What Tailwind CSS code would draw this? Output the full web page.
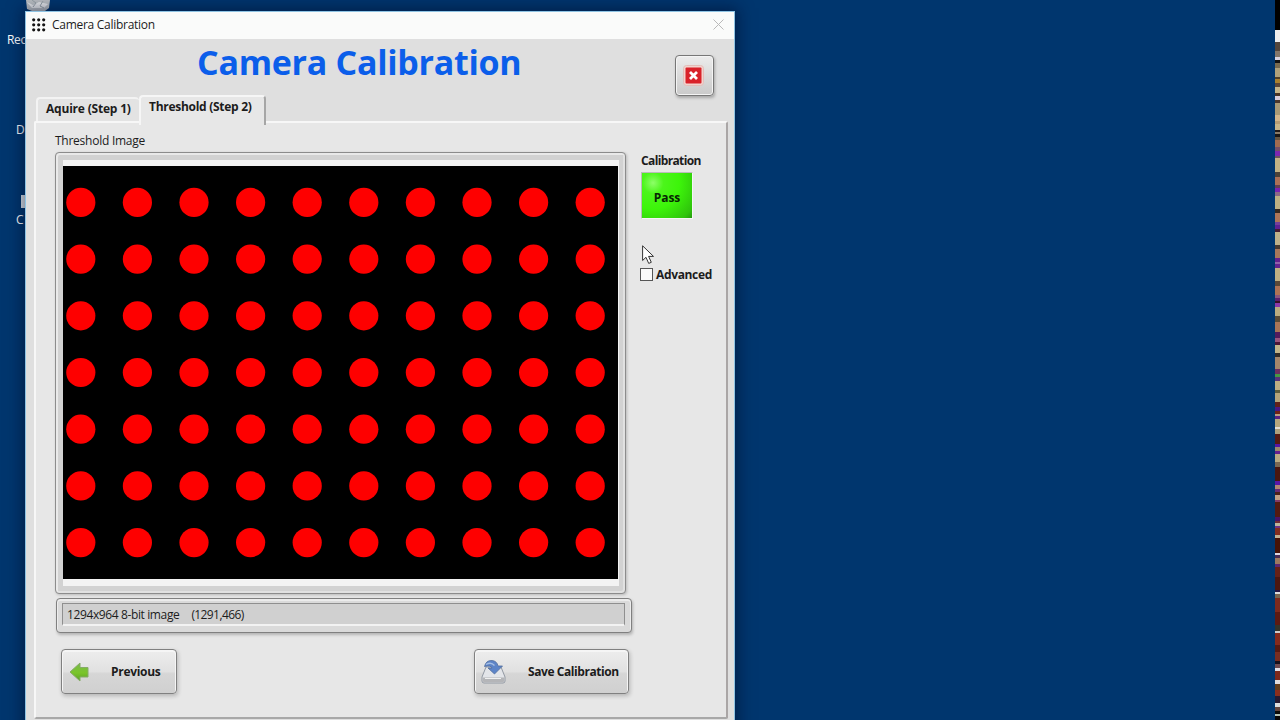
<!DOCTYPE html>
<html lang="en">
<head>
    <meta charset="UTF-8">
    <meta name="viewport" content="width=device-width, initial-scale=1.0">
    <title>Camera Calibration</title>
    <script src="https://cdn.jsdelivr.net/npm/@tailwindcss/browser@4"></script>
</head>
<body class="h-[720px] w-[1280px] overflow-hidden bg-[#00366e] font-['Open_Sans','Noto_Sans',sans-serif] text-[#1c1c1c]">
    <div class="relative flex h-full w-full justify-end overflow-hidden">

        <!-- Desktop icons, partly hidden behind the window -->
        <svg class="absolute left-[24px] top-0" width="28" height="14" viewBox="0 0 28 14">
            <path d="M2 0H26L25 8L21 11H8L3 9Z" fill="#bcc1c4"/>
            <path d="M3 2L9 5L15 2L24 4L20 8H8Z" fill="#e9ebec"/>
            <path d="M8 0L12 3L9 7M19 1L16 6L20 8" stroke="#9aa4aa" fill="none"/>
        </svg>
        <span class="absolute left-[7px] top-[32px] text-[12px] leading-4 tracking-[-0.3px] text-white">Rec</span>
        <span class="absolute left-[16px] top-[122px] text-[12px] leading-4 text-white">D</span>
        <div class="absolute left-[21px] top-[195px] h-[13px] w-[5px] bg-[#dfe5ea]"></div>
        <span class="absolute left-[16px] top-[212px] text-[12px] leading-4 text-white">C</span>

        <!-- Window -->
        <div class="absolute left-[25px] top-[11px] flex h-[730px] w-[710px] flex-col border-x border-t border-[#8fc4e4] bg-[#dfdfdf] shadow-[0_0_14px_3px_rgba(0,10,40,0.5)]">
            <div class="flex h-[27px] shrink-0 items-center bg-[#fafbfa] pb-[2px] pl-[6px] pr-[10px]">
                <svg width="14" height="14" viewBox="0 0 14 14" fill="#151515">
                    <circle cx="1.7" cy="1.8" r="1.6"/><circle cx="6.7" cy="1.8" r="1.6"/><circle cx="11.7" cy="1.8" r="1.6"/>
                    <circle cx="1.7" cy="6.8" r="1.6"/><circle cx="6.7" cy="6.8" r="1.6"/><circle cx="11.7" cy="6.8" r="1.6"/>
                    <circle cx="1.7" cy="11.8" r="1.6"/><circle cx="6.7" cy="11.8" r="1.6"/><circle cx="11.7" cy="11.8" r="1.6"/>
                </svg>
                <span class="ml-[6px] whitespace-nowrap text-[12px] leading-4 tracking-[-0.28px]">Camera Calibration</span>
                <svg class="ml-auto" width="11" height="11" viewBox="0 0 11 11" stroke="#b9b9b9" fill="none"><path d="M.5 .5L10.5 10.5M10.5 .5L.5 10.5"/></svg>
            </div>

            <div class="flex h-[56px] shrink-0 items-start">
                <h1 class="ml-[171px] w-[326px] whitespace-nowrap text-[34px] font-bold leading-[46px] tracking-[-0.28px] text-[#0b5eea]">Camera Calibration</h1>
                <button class="ml-[152px] mt-[16px] flex h-[41px] w-[39px] items-center justify-center rounded-[4px] border border-[#777] bg-gradient-to-b from-[#ececec] to-[#cacaca] pr-[2px] shadow-[1px_2px_3px_rgba(0,0,0,0.25),inset_0_0_0_1px_#f4f4f4]">
                    <svg width="21" height="21" viewBox="0 0 21 21">
                        <rect x=".5" y=".5" width="20" height="20" rx="3" fill="#f2d4cf" stroke="#e3bdb8"/>
                        <rect x="2.5" y="2.5" width="16" height="16" rx="1" fill="#d9222a"/>
                        <path d="M7 7L14 14M14 7L7 14" stroke="#fff" stroke-width="2.8"/>
                    </svg>
                </button>
            </div>

            <!-- Tabs -->
            <div class="relative z-10 -mb-[4px] flex h-[30px] shrink-0 items-start pl-[10px]">
                <div class="mt-[2px] h-[24px] w-[103px] rounded-t-[4px] border-l-2 border-t-2 border-[#f3f3f3] bg-[#e3e3e3] pl-[8px] pt-[2px] text-[12px] font-bold leading-4 tracking-[-0.2px] whitespace-nowrap">Aquire (Step 1)</div>
                <div class="h-[30px] w-[127px] rounded-t-[4px] border-l-2 border-t-2 border-r-2 border-l-[#f6f6f6] border-t-[#f6f6f6] border-r-[#a6a6a6] bg-[#e7e7e7] pl-[8px] pt-[2px] text-[12px] font-bold leading-4 tracking-[-0.28px] whitespace-nowrap">Threshold (Step 2)</div>
            </div>

            <!-- Tab page -->
            <div class="ml-[8px] flex h-[598px] w-[694px] shrink-0 rounded-[2px] border-2 border-b-[#a8a8a8] border-l-[#f7f7f7] border-r-[#aaa6a6] border-t-[#f7f7f7] bg-[#e7e7e7] pl-[19px]">
                <div class="w-[576px]">
                    <p class="mt-[10px] h-[19px] whitespace-nowrap text-[12px] leading-4 tracking-[-0.25px]">Threshold Image</p>
                    <div class="h-[442px] w-[571px] rounded-[4px] border border-[#8c8c8c] bg-[#d2d2d2] px-[7px] pt-[7px] shadow-[1px_1px_3px_rgba(0,0,0,0.2),inset_1px_1px_0_1px_#e9e9e9,inset_-1px_-1px_0_1px_#e1e1e1]">
                        <div class="h-[426px] w-[556px] border-b-[7px] border-r border-t-[6px] border-[#f3f3f3] bg-black">
                            <svg id="dots" class="block" width="555" height="413" fill="#fe0000"></svg>
                        </div>
                    </div>
                    <div class="ml-[1px] mt-[4px] h-[35px] w-[576px] rounded-[4px] border border-[#808080] bg-[#dadada] px-[5px] pt-[4px] shadow-[1px_2px_3px_rgba(0,0,0,0.22),inset_0_1px_0_1px_#ececec]">
                        <div class="flex h-[23px] w-[563px] items-center whitespace-pre border border-b-2 border-[#8f8f8f] border-b-[#f2f2f2] bg-[#d0d0d0] pl-[4px] pt-[2px] text-[12px] leading-4 tracking-[-0.38px]"><span>1294x964 8-bit image</span><span class="ml-[12px] tracking-[-0.6px]">(1291,466)</span></div>
                    </div>
                    <div class="ml-[6px] mt-[16px] flex w-[568px] justify-between">
                        <button class="flex h-[45px] w-[116px] items-center whitespace-nowrap rounded-[4px] border border-[#808080] bg-[linear-gradient(#ededed,#e1e1e1_50%,#d6d6d6_55%,#d0d0d0)] pl-[7px] pt-[1px] text-[12px] font-bold tracking-[-0.3px] shadow-[1px_2px_4px_rgba(0,0,0,0.22),inset_0_1px_0_1px_#f5f5f5]">
                            <svg class="-mt-[1px]" width="20" height="20" viewBox="0 0 20 20">
                                <defs><linearGradient id="leaf" x2="0" y2="1"><stop stop-color="#79b94b"/><stop offset=".55" stop-color="#7ac52a"/><stop offset="1" stop-color="#5a9f29"/></linearGradient></defs>
                                <path d="M1 10L11 1V5.5H19V15H11V19Z" fill="url(#leaf)" stroke="#86ab68"/>
                            </svg>
                            <span class="ml-[22px]">Previous</span>
                        </button>
                        <button class="flex h-[45px] w-[155px] items-center whitespace-nowrap rounded-[4px] border border-[#808080] bg-[linear-gradient(#ededed,#e1e1e1_50%,#d6d6d6_55%,#d0d0d0)] pl-[6px] pt-[1px] text-[12px] font-bold tracking-[-0.43px] shadow-[1px_2px_4px_rgba(0,0,0,0.22),inset_0_1px_0_1px_#f5f5f5]">
                            <svg class="-mt-[2px]" width="25" height="25" viewBox="0 0 25 25">
                                <path d="M5 8H20L24 18V22Q24 24 22 24H3Q1 24 1 22V18Z" fill="#e3e5e9" stroke="#9299a3"/>
                                <path d="M1.5 18.5H23.5V22L22 23.5H3L1.5 22Z" fill="#b4b5b8"/>
                                <path d="M4 19.5H20" stroke="#f0f0f0"/>
                                <path d="M3.5 7.5Q5 1 11 1.5Q16 2 17 7L21.5 7L13.5 15L7 9H11Q10 6 3.5 7.5Z" fill="#5c84c8" stroke="#526d9d" stroke-width=".8"/>
                                <path d="M5 5.5Q10 2.5 13.5 6.5" stroke="#a5bee4" stroke-width="1.3" fill="none"/>
                            </svg>
                            <span class="ml-[22px]">Save Calibration</span>
                        </button>
                    </div>
                </div>

                <div class="ml-[10px] w-[80px] text-[12px] font-bold leading-4 tracking-[-0.4px]">
                    <p class="mt-[30px] tracking-[-0.63px]">Calibration</p>
                    <div class="mt-[3px] flex h-[47px] w-[52px] items-center justify-center border border-[#bbb] border-b-[#f6f6f6] border-r-[#f6f6f6] bg-[radial-gradient(circle_at_22%_22%,#8dff68_0,#4cf51b_20%,#3df50a_50%,#2fc40c_88%,#26980e_100%)] pt-[5px] text-[#082604] tracking-[-0.1px]">Pass</div>
                    <div class="-ml-[1px] mt-[47px] flex items-center">
                        <div class="h-[13px] w-[13px] border border-[#555] bg-[#fafafa]"></div>
                        <span class="ml-[3px] pt-[1px] tracking-[-0.35px]">Advanced</span>
                    </div>
                </div>
            </div>
        </div>

        <!-- Mouse pointer -->
        <svg class="absolute left-[642px] top-[245px]" width="13" height="20" viewBox="0 0 13 20">
            <path d="M.6 .8V15.5L4 12.3L6.7 18.4L9.3 17.3L6.6 11.4H11.5Z" fill="#fff" stroke="#333" stroke-width="1"/>
        </svg>

        <!-- Edge of the second monitor -->
        <svg id="edge" width="5" height="720" shape-rendering="crispEdges"></svg>
    </div>

    <script>
        const NS = 'http://www.w3.org/2000/svg';
        function add(parent, tag, attrs) {
            const el = document.createElementNS(NS, tag);
            for (const k in attrs) el.setAttribute(k, attrs[k]);
            parent.appendChild(el);
        }

        // calibration grid, 10 x 7
        const dots = document.getElementById('dots');
        for (let r = 0; r < 7; r++) {
            for (let c = 0; c < 10; c++) {
                add(dots, 'circle', { cx: 17.8 + c * 56.6, cy: 36.4 + r * 56.7, r: 14.6 });
            }
        }

        // [start y, colour] bands, each one runs to the next
        const bands = [
            [0, '#000'], [30, '#eee'], [42, '#54463c'], [51, '#83766a'], [57, '#d9d3df'], [60, '#111'], [63, '#786b50'],
            [68, '#aea17b'], [77, '#514028'], [79, '#a78030'], [83, '#5c4636'], [87, '#c5b58a'], [93, '#493425'],
            [96, '#d7cbd9'], [100, '#4b382d'], [103, '#a99a76'], [115, '#d2b68c'], [121, '#b69c74'], [124, '#c7b58a'],
            [130, '#211a18'], [132, '#887a68'], [134, '#1b1715'], [137, '#655440'], [140, '#a06b50'], [147, '#755069'],
            [151, '#7d27b0'], [156, '#6d5560'], [158, '#c2b285'], [172, '#4d4238'], [177, '#ab7057'], [185, '#654052'],
            [188, '#7924b1'], [192, '#8b6986'], [196, '#bdb083'], [209, '#342820'], [213, '#ad7558'], [222, '#74409a'],
            [225, '#5f2194'], [229, '#461c32'], [232, '#beb18a'], [245, '#493b31'], [249, '#a6775b'], [258, '#64218f'],
            [262, '#9162a9'], [264, '#642390'], [268, '#beb083'], [281, '#5a4938'], [286, '#ad7355'], [295, '#8a567e'],
            [298, '#59216f'], [301, '#361225'], [303, '#8a38aa'], [307, '#b9ac80'], [316, '#594c37'], [322, '#a87557'],
            [332, '#541b5d'], [338, '#9a557d'], [342, '#4c1637'], [345, '#c2b489'], [353, '#342c27'], [357, '#a4866b'],
            [369, '#6d2f61'], [374, '#499742'], [377, '#58337b'], [381, '#bdae83'], [390, '#5d5d3d'], [393, '#b4a47a'],
            [402, '#61211b'], [407, '#4b1883'], [411, '#702418'], [414, '#bb9d80'], [416, '#5b2383'], [419, '#b4a77e'],
            [427, '#e4dfd4'], [429, '#aca17d'], [434, '#541a12'], [444, '#5715a4'], [447, '#9b886d'], [451, '#64218f'],
            [454, '#baab82'], [462, '#7b6852'], [467, '#4a170f'], [481, '#5917a8'], [485, '#b48573'], [489, '#682c75'],
            [492, '#4d211b'], [495, '#c4a083'], [500, '#833b67'], [502, '#531a11'], [517, '#481467'], [521, '#702c35'],
            [523, '#bcb59c'], [526, '#713285'], [528, '#822e20'], [535, '#c3b191'], [538, '#461307'], [553, '#ded9e2'],
            [555, '#4a2b53'], [558, '#9c7960'], [564, '#5e2770'], [567, '#652117'], [577, '#4b170f'], [590, '#251342'],
            [592, '#ddd'], [594, '#796550'], [598, '#7d2a1d'], [612, '#5c1a12'], [625, '#333329'], [631, '#ccc'],
            [633, '#842a1d'], [645, '#571a11'], [652, '#782d20'], [661, '#16101c'], [664, '#6e4a50'], [668, '#e1dfe6'],
            [671, '#7d291b'], [680, '#ddd'], [684, '#603d1b'], [690, '#8a2e1d'], [696, '#271a30'], [703, '#ddd'],
            [707, '#62453d'], [711, '#0b0b08'], [714, '#b5c3b5'], [716, '#090909']
        ];
        const edge = document.getElementById('edge');
        bands.forEach(([y, fill], i) => {
            const end = i + 1 < bands.length ? bands[i + 1][0] : 720;
            add(edge, 'rect', { x: 0, y, width: 5, height: end - y, fill });
        });
    </script>
</body>
</html>
